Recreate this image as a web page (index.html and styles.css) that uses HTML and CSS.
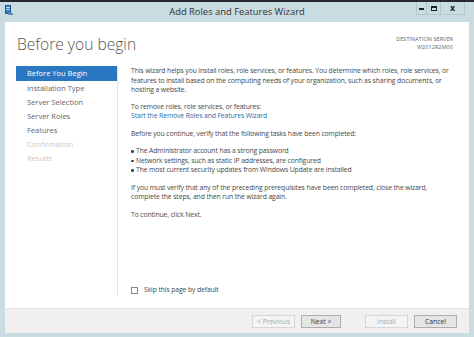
FILE: index.html
```html
<!DOCTYPE html>
<html lang="en">
<head>
  <meta charset="UTF-8" />
  <meta name="viewport" content="width=device-width,initial-scale=1" />
  <title>Add Roles and Features Wizard</title>
  <link rel="stylesheet" href="styles.css">
</head>
<body>

  <div class="window">
    <!-- Title bar -->
    <div class="titlebar">
      <svg class="app-icon" width="8" height="11" viewBox="0 0 8 11">
        <rect x="0.5" y="0.5" width="5" height="8" fill="#3a7fc4" stroke="#1d5a96" stroke-width="1"/>
        <rect x="1.5" y="2" width="3" height="1" fill="#cfe6fb"/>
        <rect x="1.5" y="4" width="3" height="1" fill="#cfe6fb"/>
        <rect x="3" y="8" width="5" height="2" fill="#6a8aa5"/>
      </svg>
      <span class="title">Add Roles and Features Wizard</span>
      <div class="controls">
        <span class="ctl ctl-min"><i></i></span>
        <span class="ctl ctl-max"><i></i></span>
        <span class="ctl ctl-close">x</span>
      </div>
    </div>

    <div class="client">
      <div class="header">
        <h1>Before you begin</h1>
        <div class="dest">
          <div>DESTINATION SERVER</div>
          <div>W2012R2M00</div>
        </div>
      </div>

      <div class="main">
        <!-- Steps -->
        <ul class="steps">
          <li class="active">Before You Begin</li>
          <li>Installation Type</li>
          <li>Server Selection</li>
          <li>Server Roles</li>
          <li>Features</li>
          <li class="off">Confirmation</li>
          <li class="off">Results</li>
        </ul>

        <!-- Page text -->
        <div class="content">
          <div class="text">
            <p class="intro">This wizard helps you install roles, role services, or features. You determine which roles, role services, or features to install based on the computing needs of your organization, such as sharing documents, or hosting a website.</p>
            <p>To remove roles, role services, or features:<br><a href="#">Start the Remove Roles and Features Wizard</a></p>
            <p>Before you continue, verify that the following tasks have been completed:</p>
            <ul class="tasks">
              <li>The Administrator account has a strong password</li>
              <li>Network settings, such as static IP addresses, are configured</li>
              <li>The most current security updates from Windows Update are installed</li>
            </ul>
            <p>If you must verify that any of the preceding prerequisites have been completed, close the wizard, complete the steps, and then run the wizard again.</p>
            <p>To continue, click Next.</p>
          </div>
          <label class="skip"><span class="box"></span>Skip this page by default</label>
        </div>
      </div>

      <div class="footer">
        <button class="btn" disabled>&lt; Previous</button>
        <button class="btn btn-next">Next &gt;</button>
        <button class="btn btn-install" disabled>Install</button>
        <button class="btn">Cancel</button>
      </div>
    </div>
  </div>

</body>
</html>
```

FILE: styles.css
```css
* { box-sizing: border-box; margin:0; padding:0 }
body {
  font-family: 'Open Sans', 'Noto Sans', sans-serif;
  background: #c8dce2;
  color: #444;
  width: 474px;
  height: 337px;
  overflow: hidden;
}

.window {
  height: 337px;
  display: flex;
  flex-direction: column;
  border-top: 2px solid #262a2c;
  background: #c8dce2;
}

/* title bar */
.titlebar {
  height: 20px;
  display: grid;
  grid-template-columns: 1fr auto 1fr;
  align-items: start;
}

.app-icon { margin: 3px 0 0 5px; }

.titlebar .title {
  font-size: 9.4px;
  line-height: 20px;
  color: #333;
}

.controls {
  justify-self: end;
  display: flex;
  margin-right: 9px;
}

.ctl {
  height: 13px;
  display: flex;
  align-items: center;
  justify-content: center;
  border: 1px solid #b3c8cf;
  border-top: none;
  color: #222;
}
.ctl + .ctl { border-left: none; }
.ctl-min { width: 11px; }
.ctl-min i { width: 5px; height: 2px; background: #222; margin-top: 2px; }
.ctl-max { width: 14px; }
.ctl-max i { width: 6px; height: 5px; border: 1.5px solid #222; border-top-width: 2px; }
.ctl-close { width: 24px; font-size: 8px; font-weight: bold; font-family: 'DejaVu Sans', sans-serif; }

/* client area */
.client {
  height: 311px;
  margin: 0 5px;
  background: #fff;
  display: flex;
  flex-direction: column;
}

.header {
  height: 44px;
  display: flex;
  justify-content: space-between;
  padding: 0 16px 0 12px;
}

.header h1 {
  font-weight: 300;
  font-size: 15.6px;
  line-height: 20px;
  margin-top: 12px;
  color: #555;
}

.dest {
  margin-top: 13px;
  text-align: right;
  font-size: 5.6px;
  line-height: 8px;
  color: #6a6a6a;
}

.main {
  height: 242px;
  display: flex;
  padding-bottom: 13px;
}

.steps {
  list-style: none;
  width: 102px;
  margin-left: 11px;
  border-right: 1px solid #e2e2e2;
  flex-shrink: 0;
}

.steps li {
  height: 14px;
  line-height: 14px;
  padding-left: 11px;
  font-size: 7.5px;
  color: #666;
}
.steps li.active { background: #2a77c3; color: #fff; height: 15px; line-height: 15px; }
.steps li.off { color: #c9c9c9; }

.content {
  flex: 1;
  margin-left: 13px;
  padding-right: 14px;
  display: flex;
  flex-direction: column;
  font-size: 6.8px;
  letter-spacing: -0.1px;
  line-height: 9.5px;
  color: #474747;
}

.text p { margin-bottom: 8px; }
.text p.intro { margin-bottom: 7px; }
.text a { color: #2b6ea4; text-decoration: none; }

.tasks { list-style: none; margin-bottom: 8px; }
.tasks li { padding-left: 5px; position: relative; }
.tasks li::before {
  content: '';
  position: absolute;
  left: 0; top: 4px;
  width: 2.5px; height: 2.5px;
  border-radius: 50%;
  background: #444;
}

.skip {
  margin-top: auto;
  display: flex;
  align-items: center;
  gap: 6px;
  height: 10px;
}
.skip .box {
  width: 7px; height: 7px;
  border: 1px solid #8a8a8a;
  background: #fff;
}

/* footer */
.footer {
  height: 25px;
  background: #f0f0f0;
  border-top: 1px solid #e3e3e3;
  display: flex;
  justify-content: flex-end;
  align-items: flex-start;
  padding: 6px 12px 0 0;
}

.btn {
  width: 43px;
  height: 13px;
  font-family: inherit;
  font-size: 6.8px;
  color: #333;
  background: #e5e5e5;
  border: 1px solid #adadad;
}
.btn + .btn { margin-left: 6px; }
.btn:disabled { color: #a9a9a9; background: #f4f4f4; border-color: #d6d6d6; }
.btn-next { width: 40px; margin-left: 5px; }
.btn.btn-install { margin-left: 24px; }
```
